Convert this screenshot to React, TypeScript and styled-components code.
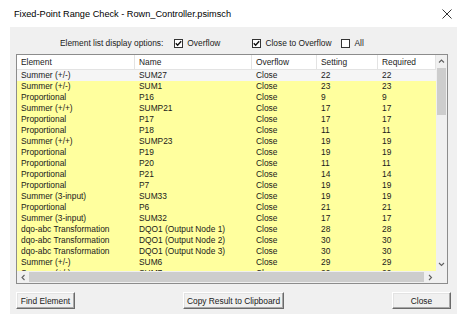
import React from "react";
import styled, { createGlobalStyle } from "styled-components";

const GlobalStyle = createGlobalStyle`
  html, body { margin: 0; padding: 0; background: #ffffff; }
  body { font-family: "Liberation Sans", Arial, sans-serif; color: #1b1b1b; }
  * { box-sizing: border-box; }
`;

const Window = styled.div`
  width: 474px;
  height: 318px;
  display: flex;
  flex-direction: column;
  background: #ffffff;
  overflow: hidden;
`;

const TitleBar = styled.div`
  height: 27px;
  display: flex;
  align-items: center;
  padding-left: 14px;
  font-size: 9.2px;
  color: #000;
`;

const Title = styled.div`
  flex: 1;
  padding-top: 1px;
`;

const CloseX = styled.div`
  width: 34px;
  height: 27px;
  display: flex;
  align-items: center;
  justify-content: center;
  margin-right: 10px;
`;

const Panel = styled.div`
  margin: 0 17px 0 10px;
  height: 287px;
  background: #f0f0f0;
  display: flex;
  flex-direction: column;
  padding: 0 6px;
  font-size: 8.4px;
`;

const OptionsRow = styled.div`
  display: flex;
  align-items: center;
  margin-top: 11px;
  height: 10px;
  padding-left: 44px;
`;

const OptionsLabel = styled.span`
  margin-right: 11px;
`;

const Option = styled.label<{ $gap: number }>`
  display: flex;
  align-items: center;
  margin-right: ${(p) => p.$gap}px;
`;

const Box = styled.span`
  width: 9px;
  height: 9px;
  border: 1px solid #333;
  background: #fff;
  display: inline-flex;
  align-items: center;
  justify-content: center;
  margin-right: 4px;
`;

const Table = styled.div`
  margin-top: 6px;
  width: 432px;
  height: 230px;
  border: 1px solid #8c8c8c;
  background: #ffffff;
  display: grid;
  grid-template-columns: 1fr 11px;
  grid-template-rows: 1fr 12px;
`;

const List = styled.div`
  overflow: hidden;
  display: flex;
  flex-direction: column;
`;

const cols = "118px 117px 65px 61px 58px";

const HeaderRow = styled.div`
  display: grid;
  grid-template-columns: ${cols};
  height: 15px;
  flex-shrink: 0;
  border-bottom: 1px solid #e3e3e3;
  background: #ffffff;
`;

const HeaderCell = styled.div`
  padding-left: 4px;
  line-height: 14px;
  border-right: 1px solid #e3e3e3;
  color: #222;
  white-space: nowrap;
`;

const Row = styled.div<{ $bg: string }>`
  display: grid;
  grid-template-columns: ${cols};
  height: 11px;
  flex-shrink: 0;
  background: ${(p) => p.$bg};
`;

const Cell = styled.div`
  padding-left: 4px;
  line-height: 11px;
  white-space: nowrap;
  overflow: hidden;
  color: #1a1a1a;
`;

const VScroll = styled.div`
  background: #f0f0f0;
  display: flex;
  flex-direction: column;
`;

const ArrowBox = styled.div<{ $h: number; $w: number }>`
  height: ${(p) => p.$h}px;
  width: ${(p) => p.$w}px;
  flex-shrink: 0;
  display: flex;
  align-items: center;
  justify-content: center;
`;

const VThumb = styled.div`
  height: 47px;
  margin: 0 1px;
  background: #cdcdcd;
`;

const Spacer = styled.div`
  flex: 1;
`;

const HScroll = styled.div`
  background: #f0f0f0;
  display: flex;
  flex-direction: row;
`;

const HThumb = styled.div`
  flex: 1;
  margin: 1px 0;
  background: #cdcdcd;
`;

const Corner = styled.div`
  background: #f0f0f0;
`;

const ButtonRow = styled.div`
  margin-top: 8px;
  display: flex;
  justify-content: space-between;
`;

const Button = styled.div<{ $w: number }>`
  width: ${(p) => p.$w}px;
  height: 17px;
  background: #f0f0f0;
  border-top: 1px solid #ffffff;
  border-left: 1px solid #ffffff;
  border-right: 1px solid #6a6a6a;
  border-bottom: 1px solid #6a6a6a;
  box-shadow: inset -1px -1px 0 #a8a8a8, inset 1px 1px 0 #e3e3e3;
  display: flex;
  align-items: center;
  justify-content: center;
  color: #1a1a1a;
`;

const Check = () => (
  <svg width="7" height="7" viewBox="0 0 7 7">
    <path d="M0.8 3.3 L2.6 5.2 L6.2 1.2" stroke="#111" strokeWidth="1.4" fill="none" />
  </svg>
);

const Chevron = ({ dir }: { dir: "up" | "down" | "left" | "right" }) => {
  const d = {
    up: "M1 4.5 L3.5 2 L6 4.5",
    down: "M1 2 L3.5 4.5 L6 2",
    left: "M4.5 1 L2 3.5 L4.5 6",
    right: "M2 1 L4.5 3.5 L2 6",
  }[dir];
  return (
    <svg width="7" height="7" viewBox="0 0 7 7">
      <path d={d} stroke="#606060" strokeWidth="1.1" fill="none" />
    </svg>
  );
};

type R = [string, string, string, string, string];

const rows: R[] = [
  ["Summer (+/-)", "SUM27", "Close", "22", "22"],
  ["Summer (+/-)", "SUM1", "Close", "23", "23"],
  ["Proportional", "P16", "Close", "9", "9"],
  ["Summer (+/+)", "SUMP21", "Close", "17", "17"],
  ["Proportional", "P17", "Close", "17", "17"],
  ["Proportional", "P18", "Close", "11", "11"],
  ["Summer (+/+)", "SUMP23", "Close", "19", "19"],
  ["Proportional", "P19", "Close", "19", "19"],
  ["Proportional", "P20", "Close", "11", "11"],
  ["Proportional", "P21", "Close", "14", "14"],
  ["Proportional", "P7", "Close", "19", "19"],
  ["Summer (3-input)", "SUM33", "Close", "19", "19"],
  ["Proportional", "P6", "Close", "21", "21"],
  ["Summer (3-input)", "SUM32", "Close", "17", "17"],
  ["dqo-abc Transformation", "DQO1 (Output Node 1)", "Close", "28", "28"],
  ["dqo-abc Transformation", "DQO1 (Output Node 2)", "Close", "30", "30"],
  ["dqo-abc Transformation", "DQO1 (Output Node 3)", "Close", "30", "30"],
  ["Summer (+/-)", "SUM6", "Close", "29", "29"],
  ["Summer (+/-)", "SUM7", "Close", "29", "29"],
];

const headers = ["Element", "Name", "Overflow", "Setting", "Required"];

export default function App() {
  return (
    <>
      <GlobalStyle />
      <Window>
        <TitleBar>
          <Title>Fixed-Point Range Check - Rown_Controller.psimsch</Title>
          <CloseX>
            <svg width="10" height="10" viewBox="0 0 10 10">
              <path d="M0.5 0.5 L9.5 9.5 M9.5 0.5 L0.5 9.5" stroke="#333" strokeWidth="1" />
            </svg>
          </CloseX>
        </TitleBar>
        <Panel>
          <OptionsRow>
            <OptionsLabel>Element list display options:</OptionsLabel>
            <Option $gap={32}>
              <Box><Check /></Box>
              Overflow
            </Option>
            <Option $gap={10}>
              <Box><Check /></Box>
              Close to Overflow
            </Option>
            <Option $gap={0}>
              <Box />
              All
            </Option>
          </OptionsRow>
          <Table>
            <List>
              <HeaderRow>
                {headers.map((h) => (
                  <HeaderCell key={h}>{h}</HeaderCell>
                ))}
              </HeaderRow>
              {rows.map((r, i) => (
                <Row key={i} $bg={i === 0 ? "#f5f5f5" : "#ffff9e"}>
                  {r.map((c, j) => (
                    <Cell key={j}>{c}</Cell>
                  ))}
                </Row>
              ))}
            </List>
            <VScroll>
              <ArrowBox $h={13} $w={11}>
                <Chevron dir="up" />
              </ArrowBox>
              <VThumb />
              <Spacer />
              <ArrowBox $h={13} $w={11}>
                <Chevron dir="down" />
              </ArrowBox>
            </VScroll>
            <HScroll>
              <ArrowBox $h={12} $w={12}>
                <Chevron dir="left" />
              </ArrowBox>
              <HThumb />
              <ArrowBox $h={12} $w={12}>
                <Chevron dir="right" />
              </ArrowBox>
            </HScroll>
            <Corner />
          </Table>
          <ButtonRow>
            <Button $w={59}>Find Element</Button>
            <Button $w={101}>Copy Result to Clipboard</Button>
            <Button $w={59}>Close</Button>
          </ButtonRow>
        </Panel>
      </Window>
    </>
  );
}
